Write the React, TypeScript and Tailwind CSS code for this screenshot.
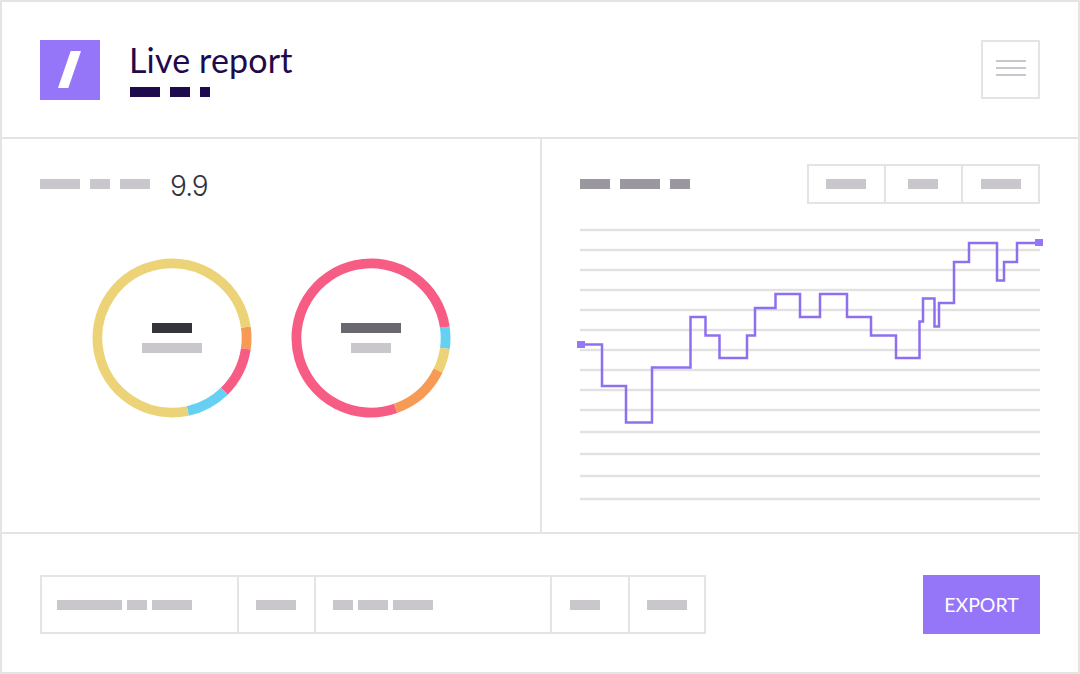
const LINE = "#e2e2e2";

function Bar({ w, className = "bg-[#c9c6cc]" }: { w: string; className?: string }) {
  return <span className={`block h-[10px] ${w} ${className}`} />;
}

type Seg = { from: number; to: number; color: string };

function arc(from: number, to: number) {
  const r = 74.6;
  const c = 80;
  const a = (from * Math.PI) / 180;
  const b = (to * Math.PI) / 180;
  const large = to - from > 180 ? 1 : 0;
  return `M ${c + r * Math.cos(a)} ${c + r * Math.sin(a)} A ${r} ${r} 0 ${large} 1 ${c + r * Math.cos(b)} ${c + r * Math.sin(b)}`;
}

function Donut({ segs, children }: { segs: Seg[]; children: React.ReactNode }) {
  return (
    <div className="grid h-[160px] w-[160px]">
      <svg width="160" height="160" viewBox="0 0 160 160" className="col-start-1 row-start-1">
        {segs.map((s, i) => (
          <path key={i} d={arc(s.from, s.to)} fill="none" stroke={s.color} strokeWidth="9.8" />
        ))}
      </svg>
      <div className="col-start-1 row-start-1 flex flex-col items-center gap-[10px] pt-[65px]">{children}</div>
    </div>
  );
}

const YELLOW = "#ecd377";
const ORANGE = "#f69a55";
const PINK = "#f75c85";
const BLUE = "#66d0f3";

const points =
  "581,344.5 602,344.5 602,386 626,386 626,422.5 652,422.5 652,367.5 690.5,367.5 690.5,317 705.5,317 705.5,335.5 719.5,335.5 719.5,358 747,358 747,335.5 755,335.5 755,308 775.5,308 775.5,294 800,294 800,317 820,317 820,294 847,294 847,317 871,317 871,335.5 896,335.5 896,358 919.5,358 919.5,321.5 923,321.5 923,298.5 934.5,298.5 934.5,326.5 939,326.5 939,303 954,303 954,262 969,262 969,243 997,243 997,280.5 1004,280.5 1004,262 1017,262 1017,243 1038,243";

const gridYs = [230, 250, 270, 290, 310, 330, 350, 370, 390, 410, 432, 454, 476, 499];

function Chart() {
  return (
    <svg width="460" height="272" viewBox="580 229 460 272" className="mt-[25px] block overflow-visible">
      {gridYs.map((y) => (
        <rect key={y} x="580" y={y - 1.2} width="460" height="2.4" fill={LINE} />
      ))}
      <polyline points={points} fill="none" stroke="#8e70ee" strokeWidth="2.5" />
      <rect x="577" y="341" width="8" height="7" fill="#9575f8" />
      <rect x="1035" y="239" width="8" height="7" fill="#9575f8" />
    </svg>
  );
}

export default function App() {
  return (
    <div className="flex h-[674px] w-[1080px] flex-col border-2 border-[#e4e4e4] bg-white [font-family:Inter,sans-serif]">
      <header className="flex h-[137px] shrink-0 justify-between border-b-2 border-[#e4e4e4] px-[38px] pt-[38px]">
        <div className="flex">
          <div className="h-[60px] w-[60px] bg-[#9575f8]">
            <svg width="60" height="60" viewBox="0 0 60 60">
              <polygon points="30.7,11 41,11 28.3,48 18,48" fill="#ffffff" />
            </svg>
          </div>
          <div className="ml-[30px]">
            <h1 className="-ml-px h-[47px] text-[34px] leading-[39px] tracking-[0.15px] text-[#1f0a4d] [font-family:Lato,sans-serif]">Live report</h1>
            <div className="flex gap-[10px]">
              <Bar w="w-[30px]" className="bg-[#1f0a4d]" />
              <Bar w="w-[20px]" className="bg-[#1f0a4d]" />
              <Bar w="w-[10px]" className="bg-[#1f0a4d]" />
            </div>
          </div>
        </div>
        <div className="flex h-[59px] w-[59px] flex-col items-center gap-[5px] border-2 border-[#e4e4e4] pt-[18px]">
          <span className="block h-[2px] w-[30px] bg-[#c9c6cc]" />
          <span className="block h-[2px] w-[30px] bg-[#c9c6cc]" />
          <span className="block h-[2px] w-[30px] bg-[#c9c6cc]" />
        </div>
      </header>

      <main className="flex h-[395px] shrink-0 border-b-2 border-[#e4e4e4]">
        <section className="w-[540px] shrink-0 border-r-2 border-[#e4e4e4] pl-[38px] pt-[25px]">
          <div className="flex h-[40px] items-center gap-[10px]">
            <Bar w="w-[40px]" />
            <Bar w="w-[20px]" />
            <Bar w="w-[30px]" />
            <span className="ml-[10px] mt-[4px] text-[28px] font-light leading-[40px] tracking-[-1px] text-[#33323a]">9.9</span>
          </div>
          <div className="ml-[52px] mt-[54px] flex gap-[39px]">
            <Donut
              segs={[
                { from: -8.4, to: 8.4, color: ORANGE },
                { from: 8.4, to: 45.5, color: PINK },
                { from: 45.5, to: 77.8, color: BLUE },
                { from: 77.8, to: 351.6, color: YELLOW },
              ]}
            >
              <Bar w="w-[40px]" className="bg-[#36343b]" />
              <Bar w="w-[60px]" />
            </Donut>
            <Donut
              segs={[
                { from: -8.4, to: 8, color: BLUE },
                { from: 8, to: 26, color: YELLOW },
                { from: 26, to: 70.8, color: ORANGE },
                { from: 70.8, to: 351.6, color: PINK },
              ]}
            >
              <Bar w="w-[60px]" className="bg-[#6a676e]" />
              <Bar w="w-[40px]" />
            </Donut>
          </div>
        </section>

        <section className="flex-1 px-[38px] pt-[25px]">
          <div className="flex h-[40px] items-center justify-between">
            <div className="flex gap-[10px]">
              <Bar w="w-[30px]" className="bg-[#9a979e]" />
              <Bar w="w-[40px]" className="bg-[#9a979e]" />
              <Bar w="w-[20px]" className="bg-[#9a979e]" />
            </div>
            <div className="flex h-[40px] w-[233px] border-2 border-[#e4e4e4]">
              <div className="flex w-[77px] items-center border-r-2 border-[#e4e4e4] pl-[17px]">
                <Bar w="w-[40px]" />
              </div>
              <div className="flex w-[77px] items-center border-r-2 border-[#e4e4e4] pl-[22px]">
                <Bar w="w-[30px]" />
              </div>
              <div className="flex flex-1 items-center justify-center">
                <Bar w="w-[40px]" />
              </div>
            </div>
          </div>
          <Chart />
        </section>
      </main>

      <footer className="flex flex-1 items-start justify-between px-[38px] pt-[41px]">
        <div className="flex h-[59px] w-[666px] border-2 border-[#e4e4e4]">
          <div className="flex w-[197px] items-center gap-[5px] border-r-2 border-[#e4e4e4] pl-[15px]">
            <Bar w="w-[65px]" />
            <Bar w="w-[20px]" />
            <Bar w="w-[40px]" />
          </div>
          <div className="flex w-[77px] items-center border-r-2 border-[#e4e4e4] pl-[17px]">
            <Bar w="w-[40px]" />
          </div>
          <div className="flex w-[236px] items-center gap-[5px] border-r-2 border-[#e4e4e4] pl-[17px]">
            <Bar w="w-[20px]" />
            <Bar w="w-[30px]" />
            <Bar w="w-[40px]" />
          </div>
          <div className="flex w-[78px] items-center border-r-2 border-[#e4e4e4] pl-[18px]">
            <Bar w="w-[30px]" />
          </div>
          <div className="flex flex-1 items-center justify-center">
            <Bar w="w-[40px]" />
          </div>
        </div>
        <button className="h-[59px] w-[117px] bg-[#9575f8] text-[19.5px] text-white [font-family:Lato,sans-serif]">EXPORT</button>
      </footer>
    </div>
  );
}
